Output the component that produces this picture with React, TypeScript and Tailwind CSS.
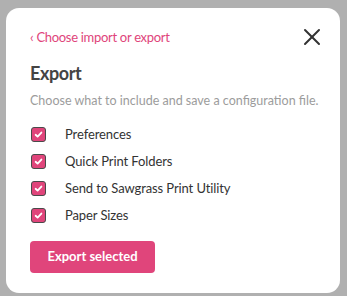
import { X } from "lucide-react";

const items = [
  "Preferences",
  "Quick Print Folders",
  "Send to Sawgrass Print Utility",
  "Paper Sizes",
];

function Check() {
  return (
    <span className="flex h-[15px] w-[15px] items-center justify-center rounded-[3px] border border-[#4a4a4a] bg-[#e0457b]">
      <svg width="9" height="9" viewBox="0 0 10 10" fill="none">
        <path d="M1.8 5.3 L4 7.4 L8.2 2.8" stroke="white" strokeWidth="2" strokeLinecap="round" strokeLinejoin="round" />
      </svg>
    </span>
  );
}

export default function App() {
  return (
    <div className="h-[296px] w-[347px] bg-[#b0b0b0] pt-[8px] pl-[6px]" style={{ fontFamily: "Lato, 'Liberation Sans', sans-serif" }}>
      <div className="h-[285px] w-[334px] rounded-[13px] bg-white px-[24px] pt-[19px]">
        <div className="flex h-[20px] items-center justify-between">
          <span className="text-[13px] leading-[20px] tracking-[-0.3px] text-[#e0457b]">‹ Choose import or export</span>
          <X className="mr-[-10px] mt-[-1px] h-[28px] w-[28px] text-[#333]" strokeWidth={1.7} />
        </div>
        <h1 className="mt-[14px] text-[18px] font-bold leading-[24px] tracking-[-0.4px] text-[#444]">Export</h1>
        <p className="mt-[8px] whitespace-nowrap text-[12.5px] leading-[16px] text-[#9c9c9c]">
          Choose what to include and save a configuration file.
        </p>
        <div className="mt-[12px] flex flex-col">
          {items.map((t) => (
            <label key={t} className="flex h-[27px] items-center gap-[19px] pl-[1px] text-[13px] tracking-[-0.1px] text-[#333]">
              <Check />
              {t}
            </label>
          ))}
        </div>
        <button className="mt-[12px] h-[32px] w-[125px] rounded-[4px] bg-[#e0457b] text-[13px] font-bold text-white">
          Export selected
        </button>
      </div>
    </div>
  );
}
